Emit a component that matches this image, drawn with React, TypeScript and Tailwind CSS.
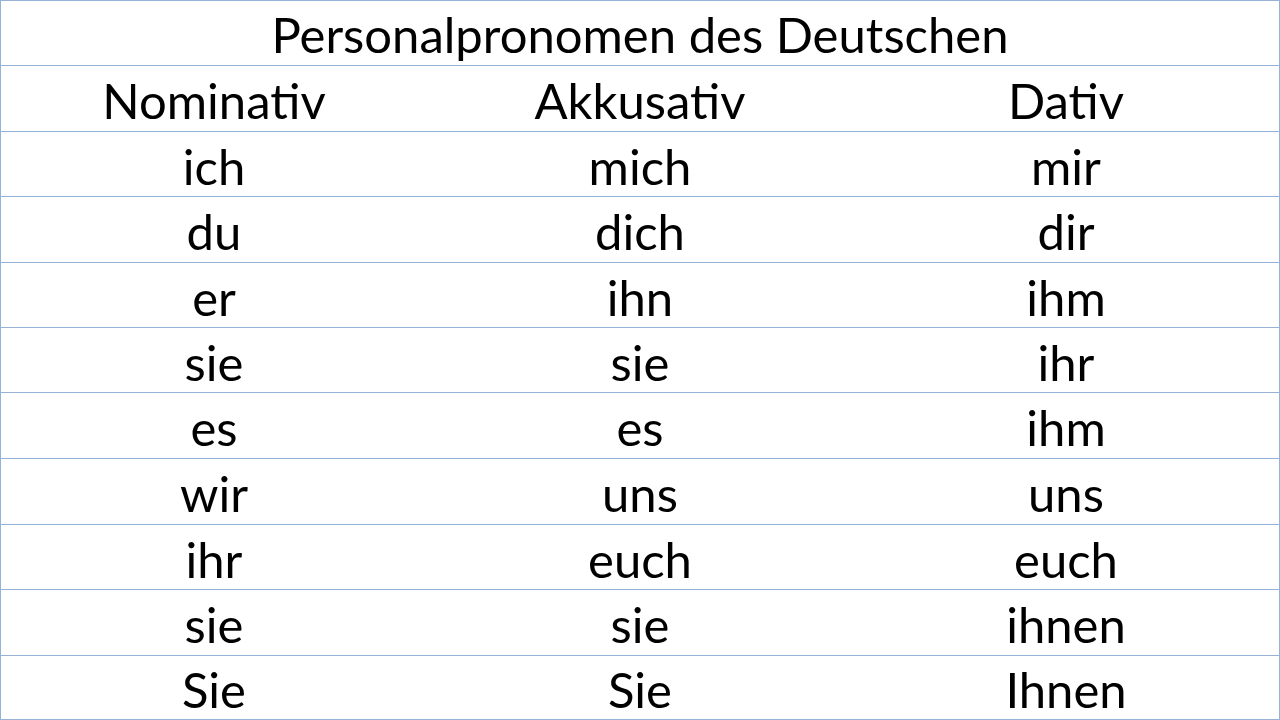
import React from 'react';

const rows = [
  ['Nominativ', 'Akkusativ', 'Dativ'],
  ['ich', 'mich', 'mir'],
  ['du', 'dich', 'dir'],
  ['er', 'ihn', 'ihm'],
  ['sie', 'sie', 'ihr'],
  ['es', 'es', 'ihm'],
  ['wir', 'uns', 'uns'],
  ['ihr', 'euch', 'euch'],
  ['sie', 'sie', 'ihnen'],
  ['Sie', 'Sie', 'Ihnen'],
];

export default function App() {
  return (
    <div className="w-[1280px] h-[720px] bg-white overflow-hidden">
      <div
        className="h-full grid grid-rows-[64px_66px_65px_66px_65px_65px_66px_66px_65px_66px_minmax(0,1fr)] border border-[#95b3d7] text-black text-[49px] leading-none"
        style={{ fontFamily: 'Lato, "Open Sans", sans-serif' }}
      >
        {/* Title */}
        <div className="flex items-center justify-center pt-0.5">
          Personalpronomen des Deutschen
        </div>

        {rows.map((row, i) => (
          <div key={i} className="grid grid-cols-3 border-t border-[#95b3d7]">
            {row.map((cell, j) => (
              <div key={j} className="flex items-center justify-center pt-1">
                {cell}
              </div>
            ))}
          </div>
        ))}
      </div>
    </div>
  );
}
